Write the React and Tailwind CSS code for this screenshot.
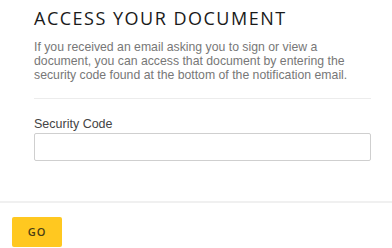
export default function App() {
  return (
    <div className="w-[392px] h-[248px] bg-white overflow-hidden flex flex-col">
      <div className="px-[34px] pt-[7px] pr-[21px]">
        <h1 className="text-[18px] leading-[22px] tracking-[1.5px] text-[#1a1a1a] font-['Open_Sans',sans-serif] font-medium">
          ACCESS YOUR DOCUMENT
        </h1>
        <p className="mt-[11px] w-[330px] text-[12.25px] leading-[14px] text-[#777] font-['Liberation_Sans',Arial,sans-serif]">
          If you received an email asking you to sign or view a document, you can access that document by entering the security code found at the bottom of the notification email.
        </p>
        <div className="mt-[16px] h-px bg-[#ececec]" />
        <label className="block mt-[17px] text-[12.5px] leading-[16px] text-[#444] font-['Liberation_Sans',Arial,sans-serif]">
          Security Code
        </label>
        <input
          type="text"
          className="block mt-[1px] w-full h-[28px] border border-[#cfcfcf] rounded-[2px] outline-none"
        />
      </div>
      <div className="mt-[40px] h-[2px] bg-[#f0f0f0]" />
      <div className="px-[12px] pt-[14px]">
        <button className="w-[50px] h-[30px] bg-[#ffc820] rounded-[2px] text-[11px] font-semibold tracking-[1px] text-[#4a3f14] font-['Open_Sans',sans-serif]">
          GO
        </button>
      </div>
    </div>
  );
}
